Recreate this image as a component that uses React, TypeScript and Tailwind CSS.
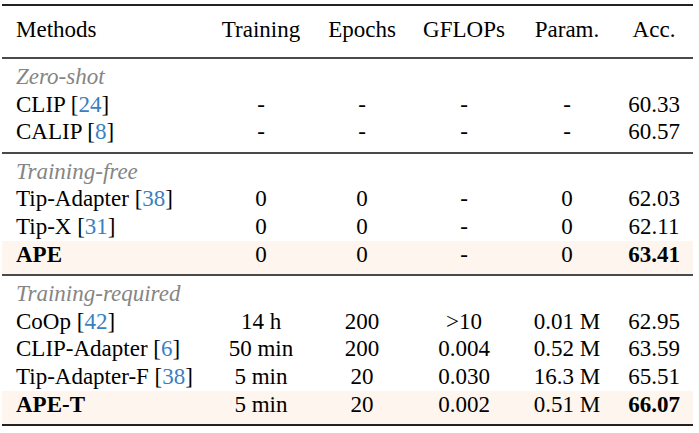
import React from 'react';

type Row = {
    name: string;
    cite?: string;
    cells: string[];
    bold?: boolean;
};

type Section = {
    label: string;
    rows: Row[];
};

const sections: Section[] = [
    {
        label: 'Zero-shot',
        rows: [
            { name: 'CLIP', cite: '24', cells: ['-', '-', '-', '-', '60.33'] },
            { name: 'CALIP', cite: '8', cells: ['-', '-', '-', '-', '60.57'] },
        ],
    },
    {
        label: 'Training-free',
        rows: [
            { name: 'Tip-Adapter', cite: '38', cells: ['0', '0', '-', '0', '62.03'] },
            { name: 'Tip-X', cite: '31', cells: ['0', '0', '-', '0', '62.11'] },
            { name: 'APE', cells: ['0', '0', '-', '0', '63.41'], bold: true },
        ],
    },
    {
        label: 'Training-required',
        rows: [
            { name: 'CoOp', cite: '42', cells: ['14 h', '200', '>10', '0.01 M', '62.95'] },
            { name: 'CLIP-Adapter', cite: '6', cells: ['50 min', '200', '0.004', '0.52 M', '63.59'] },
            { name: 'Tip-Adapter-F', cite: '38', cells: ['5 min', '20', '0.030', '16.3 M', '65.51'] },
            { name: 'APE-T', cells: ['5 min', '20', '0.002', '0.51 M', '66.07'], bold: true },
        ],
    },
];

const grid = 'grid grid-cols-[208px_102px_100px_104px_102px_75px]';
const headers = ['Training', 'Epochs', 'GFLOPs', 'Param.', 'Acc.'];

const TableRow: React.FC<{ row: Row; last: boolean }> = ({ row, last }) => {
    const hl = row.bold;
    return (
        <div className={`${grid} ${hl ? 'bg-[#fdf5ee] pb-[6px]' : ''} ${last && !hl ? 'pb-[6px]' : ''}`}>
            <div className="pl-[14px] whitespace-nowrap">
                {hl ? (
                    <span className="font-bold">{row.name}</span>
                ) : (
                    <>
                        {row.name} [<span className="text-[#3a7fc0]">{row.cite}</span>]
                    </>
                )}
            </div>
            {row.cells.map((c, i) => (
                <div
                    key={i}
                    className={`text-center whitespace-nowrap ${i === 4 ? 'pr-[3px]' : ''} ${i === 4 && hl ? 'font-bold' : ''}`}
                >
                    {c}
                </div>
            ))}
        </div>
    );
};

export default function App() {
    return (
        <div className="min-h-[433px] w-[699px] bg-white pt-[4px] pl-[2px] font-['Liberation_Serif',serif] text-[23px] leading-[27.6px] text-black">
            <div className="w-[691px]">
                <div className="h-[2px] bg-[#222]" />
                <div className={`${grid} pt-[10px] pb-[13px] leading-[28px]`}>
                    <div className="pl-[14px]">Methods</div>
                    {headers.map((h, i) => (
                        <div key={h} className={`text-center ${i === 4 ? 'pr-[3px]' : ''}`}>
                            {h}
                        </div>
                    ))}
                </div>
                {sections.map((s) => (
                    <div key={s.label}>
                        <div className="h-[2px] bg-[#4a4a4a]" />
                        <div className="pt-[4px]">
                            <div className="pl-[14px] italic text-[#858585]">{s.label}</div>
                            {s.rows.map((r, i) => (
                                <TableRow key={r.name} row={r} last={i === s.rows.length - 1} />
                            ))}
                        </div>
                    </div>
                ))}
                <div className="h-[2px] bg-[#222]" />
            </div>
        </div>
    );
}
